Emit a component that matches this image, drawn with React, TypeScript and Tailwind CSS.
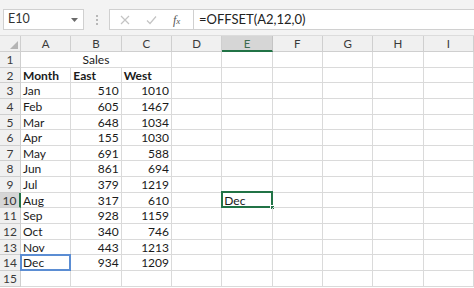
import React from "react";

const cols = ["A", "B", "C", "D", "E", "F", "G", "H", "I"];

const data: [string, number, number][] = [
  ["Jan", 510, 1010],
  ["Feb", 605, 1467],
  ["Mar", 648, 1034],
  ["Apr", 155, 1030],
  ["May", 691, 588],
  ["Jun", 861, 694],
  ["Jul", 379, 1219],
  ["Aug", 317, 610],
  ["Sep", 928, 1159],
  ["Oct", 340, 746],
  ["Nov", 443, 1213],
  ["Dec", 934, 1209],
];

const cell = "h-[15.65px] border-r border-b border-[#dadada] leading-[15px] px-[2px] whitespace-nowrap relative";
const rowHead = "h-[15.65px] border-r border-b border-[#cfcfcf] bg-[#f0f0f0] text-[#3a3a3a] text-[12px] leading-[15px] text-center";

function Empty({ n }: { n: number }) {
  return (
    <>
      {Array.from({ length: n }).map((_, i) => (
        <div key={i} className={cell} />
      ))}
    </>
  );
}

export default function App() {
  return (
    <div className="w-[474px] h-[288px] overflow-hidden bg-white text-[#1a1a1a] font-['Lato','Liberation_Sans',sans-serif]">
      {/* formula bar */}
      <div className="h-[36px] bg-[#f3f3f3] border-b border-[#dcdcdc] flex items-start pt-[9px] pl-[3px]">
        <div className="w-[81px] h-[21px] bg-white border border-[#d0d0d0] flex items-center justify-between pl-[4px] pr-[5px] text-[12.5px] text-[#333]">
          <span>E10</span>
          <svg width="7" height="4" viewBox="0 0 7 4">
            <polygon points="0,0 7,0 3.5,4" fill="#6a6a6a" />
          </svg>
        </div>
        <div className="w-[25px] h-[21px] flex flex-col items-center justify-center gap-[2px]">
          <span className="w-[2px] h-[2px] bg-[#b8b8b8]" />
          <span className="w-[2px] h-[2px] bg-[#b8b8b8]" />
          <span className="w-[2px] h-[2px] bg-[#b8b8b8]" />
        </div>
        <div className="w-[84px] h-[21px] bg-white border border-[#d0d0d0] border-r-0 flex items-center pl-[10px] gap-[16px]">
          <svg width="10" height="10" viewBox="0 0 10 10">
            <path d="M1 1 L9 9 M9 1 L1 9" stroke="#c4c4c4" strokeWidth="1.2" />
          </svg>
          <svg width="11" height="10" viewBox="0 0 11 10">
            <path d="M1 5.5 L4 8.5 L10 1.5" stroke="#c4c4c4" strokeWidth="1.2" fill="none" />
          </svg>
          <span className="font-['Liberation_Serif',serif] italic text-[12px] text-[#555] leading-none">
            f<span className="text-[9px]">x</span>
          </span>
        </div>
        <div className="flex-1 h-[21px] bg-white border border-[#d0d0d0] border-r-0 flex items-center pl-[5px] text-[13px] text-[#222]">
          =OFFSET(A2,12,0)
        </div>
      </div>

      {/* sheet */}
      <div className="grid grid-cols-[21px_repeat(9,1fr)] text-[12px]">
        <div className="h-[16px] bg-[#f0f0f0] border-r border-b border-[#cfcfcf] relative">
          <svg className="absolute right-[2px] bottom-[2px]" width="8" height="8" viewBox="0 0 8 8">
            <polygon points="8,0 8,8 0,8" fill="#b4b4b4" />
          </svg>
        </div>
        {cols.map((c) =>
          c === "E" ? (
            <div key={c} className="h-[16px] bg-[#d6d6d6] border-r border-[#c4c4c4] border-b-2 border-b-[#217346] text-center text-[11.5px] leading-[15px] text-[#3d6b4f]">
              {c}
            </div>
          ) : (
            <div key={c} className="h-[16px] bg-[#f0f0f0] border-r border-b border-[#cfcfcf] text-center text-[11.5px] leading-[15px] text-[#3a3a3a]">
              {c}
            </div>
          )
        )}

        {/* row 1 */}
        <div className={rowHead}>1</div>
        <div className={`${cell} col-span-3 text-center`}>Sales</div>
        <Empty n={6} />

        {/* row 2 */}
        <div className={rowHead}>2</div>
        <div className={`${cell} font-bold`}>Month</div>
        <div className={`${cell} font-bold`}>East</div>
        <div className={`${cell} font-bold`}>West</div>
        <Empty n={6} />

        {data.map(([m, e, w], i) => {
          const r = i + 3;
          const sel = r === 10;
          return (
            <React.Fragment key={m}>
              <div
                className={
                  sel
                    ? "h-[15.65px] border-r-2 border-r-[#217346] border-b border-b-[#cfcfcf] bg-[#d6d6d6] text-[#333] text-[12px] leading-[15px] text-center"
                    : rowHead
                }
              >
                {r}
              </div>
              <div className={cell}>
                {m}
                {r === 14 && (
                  <div className="absolute -left-[1px] -top-[1px] -right-[1px] -bottom-[1px] border-2 border-[#5b8dd3]" />
                )}
              </div>
              <div className={`${cell} text-right`}>{e}</div>
              <div className={`${cell} text-right`}>{w}</div>
              <div className={cell} />
              <div className={cell}>
                {sel && (
                  <>
                    <span>Dec</span>
                    <div className="absolute -left-[1px] -top-[2px] -right-[1px] -bottom-[1px] border-2 border-[#217346]" />
                    <div className="absolute -right-[3px] -bottom-[3px] w-[5px] h-[5px] bg-[#217346] border border-white" />
                  </>
                )}
              </div>
              <Empty n={4} />
            </React.Fragment>
          );
        })}

        {/* row 15 */}
        <div className={rowHead}>15</div>
        <Empty n={9} />
      </div>
    </div>
  );
}
